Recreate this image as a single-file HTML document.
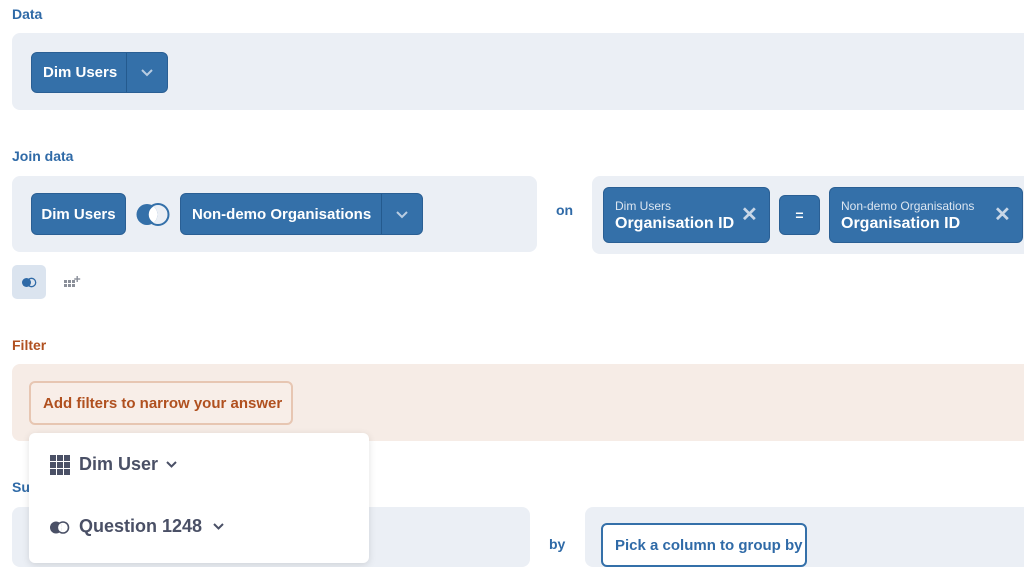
<!DOCTYPE html><html><head><style>
*{box-sizing:border-box;margin:0;padding:0}
body{width:1024px;height:549px;overflow:hidden;background:#fff;font-family:"Liberation Sans",sans-serif;position:relative}
.a{position:absolute}
.lbl{font-size:14px;font-weight:bold;color:#2f6aa7}
.box{background:#ebeff5;border-radius:8px}
.btn{background:#3470a9;border:1px solid #2a5f94;border-radius:6px;color:#fff;font-weight:bold;font-size:15px;display:flex;align-items:center}
</style></head><body>
<svg width="0" height="0" style="position:absolute"><defs><clipPath id="cl"><circle cx="12" cy="12.5" r="10.5"/></clipPath><clipPath id="cs"><circle cx="7" cy="7.5" r="6"/></clipPath></defs></svg>
<div class="a lbl" style="left:12px;top:6px">Data</div>
<div class="a box" style="left:12px;top:33px;width:1020px;height:77px"></div>
<div class="a btn" style="left:31px;top:52px;width:137px;height:41px"><span style="padding-left:11px;width:95px">Dim Users</span><span style="border-left:1px solid #245a8e;height:100%;width:41px;display:flex;align-items:center;justify-content:center"><svg width="14" height="9"><path d="M2 2l5 5 5-5" stroke="#b9cde2" stroke-width="2" fill="none"/></svg></span></div>

<div class="a lbl" style="left:12px;top:148px">Join data</div>
<div class="a box" style="left:12px;top:176px;width:525px;height:76px"></div>
<div class="a btn" style="left:31px;top:193px;width:95px;height:42px;justify-content:center">Dim Users</div>
<svg class="a" style="left:135px;top:202px" width="37" height="25"><circle cx="12" cy="12.5" r="10.5" fill="#3470a9"/><circle cx="23" cy="12.5" r="10.5" fill="none" stroke="#3470a9" stroke-width="2"/><circle cx="23" cy="12.5" r="10" fill="#fff" stroke="#3470a9" stroke-width="1.5" clip-path="url(#cl)"/><path d="M17.5 3.5a10.5 10.5 0 0 0 0 18" fill="none" stroke="#3470a9" stroke-width="1.5"/></svg>
<div class="a btn" style="left:180px;top:193px;width:243px;height:42px"><span style="padding-left:11px;width:201px">Non-demo Organisations</span><span style="border-left:1px solid #245a8e;height:100%;width:41px;display:flex;align-items:center;justify-content:center"><svg width="14" height="9"><path d="M2 2l5 5 5-5" stroke="#b9cde2" stroke-width="2" fill="none"/></svg></span></div>
<div class="a" style="left:556px;top:202px;font-size:14px;font-weight:bold;color:#2f6aa7">on</div>
<div class="a box" style="left:592px;top:176px;width:440px;height:78px"></div>
<div class="a btn" style="left:603px;top:187px;width:167px;height:56px;display:block;padding:11px 0 0 11px"><div style="font-size:12px;font-weight:normal;color:#dce6f1;line-height:14px">Dim Users</div><div style="font-size:16px;line-height:22px">Organisation ID</div><div class="a" style="left:137px;top:14px;font-size:20px;color:#c9d7e7">✕</div></div>
<div class="a btn" style="left:779px;top:195px;width:41px;height:40px;justify-content:center;font-size:14px">=</div>
<div class="a btn" style="left:829px;top:187px;width:194px;height:56px;display:block;padding:11px 0 0 11px"><div style="font-size:12px;font-weight:normal;color:#dce6f1;line-height:14px">Non-demo Organisations</div><div style="font-size:16px;line-height:22px">Organisation ID</div><div class="a" style="left:164px;top:14px;font-size:20px;color:#c9d7e7">✕</div></div>
<div class="a" style="left:12px;top:265px;width:34px;height:34px;background:#dbe4ef;border-radius:5px"></div>
<svg class="a" style="left:21px;top:277px" width="17" height="11"><circle cx="5.5" cy="5.5" r="4.5" fill="#2f6aa7"/><circle cx="10.5" cy="5.5" r="4.2" fill="none" stroke="#2f6aa7" stroke-width="1.3"/></svg>
<svg class="a" style="left:64px;top:276px" width="18" height="14"><g fill="#8a8f99"><rect x="0" y="4" width="3" height="3"/><rect x="4" y="4" width="3" height="3"/><rect x="8" y="4" width="3" height="3"/><rect x="0" y="8" width="3" height="3"/><rect x="4" y="8" width="3" height="3"/><rect x="8" y="8" width="3" height="3"/><rect x="12.5" y="0" width="1.4" height="6"/><rect x="10.2" y="2.3" width="6" height="1.4"/></g></svg>

<div class="a lbl" style="left:12px;top:337px;color:#b0501f">Filter</div>
<div class="a" style="left:12px;top:364px;width:1020px;height:77px;background:#f6ece6;border-radius:8px"></div>
<div class="a" style="left:29px;top:381px;width:264px;height:44px;border:2px solid #e7c6b2;border-radius:6px;background:#f8eee8;color:#b0501f;font-size:15px;font-weight:bold;display:flex;align-items:center;padding-left:12px">Add filters to narrow your answer</div>

<div class="a lbl" style="left:12px;top:479px">Summarize</div>
<div class="a box" style="left:12px;top:507px;width:518px;height:60px"></div>
<div class="a" style="left:549px;top:536px;font-size:14px;font-weight:bold;color:#2f6aa7">by</div>
<div class="a box" style="left:585px;top:507px;width:450px;height:60px"></div>
<div class="a" style="left:601px;top:523px;width:206px;height:44px;border:2px solid #3470a9;border-radius:6px;background:#fff;color:#2f6aa7;font-size:15px;font-weight:bold;padding:12px 0 0 12px">Pick a column to group by</div>

<div class="a" style="left:29px;top:433px;width:340px;height:130px;background:#fff;border-radius:6px;box-shadow:0 2px 8px rgba(0,0,0,.12)"></div>
<svg class="a" style="left:50px;top:455px" width="20" height="20"><g fill="#4a5066"><rect x="0" y="0" width="6" height="6"/><rect x="7" y="0" width="6" height="6"/><rect x="14" y="0" width="6" height="6"/><rect x="0" y="7" width="6" height="6"/><rect x="7" y="7" width="6" height="6"/><rect x="14" y="7" width="6" height="6"/><rect x="0" y="14" width="6" height="6"/><rect x="7" y="14" width="6" height="6"/><rect x="14" y="14" width="6" height="6"/></g></svg>
<div class="a" style="left:79px;top:454px;font-size:18px;font-weight:bold;color:#4a5066">Dim User</div>
<svg class="a" style="left:165px;top:460px" width="13" height="9"><path d="M2 2l4.5 4.5 4.5-4.5" stroke="#4a5066" stroke-width="2" fill="none"/></svg>
<svg class="a" style="left:49px;top:520px" width="22" height="15"><circle cx="7" cy="7.5" r="6" fill="#4a5066"/><circle cx="14" cy="7.5" r="5.5" fill="none" stroke="#4a5066" stroke-width="1.6"/><circle cx="14" cy="7.5" r="5.5" fill="#fff" stroke="#4a5066" stroke-width="1.2" clip-path="url(#cs)"/></svg>
<div class="a" style="left:79px;top:516px;font-size:18px;font-weight:bold;color:#4a5066">Question 1248</div>
<svg class="a" style="left:212px;top:522px" width="13" height="9"><path d="M2 2l4.5 4.5 4.5-4.5" stroke="#4a5066" stroke-width="2" fill="none"/></svg>
</body></html>
